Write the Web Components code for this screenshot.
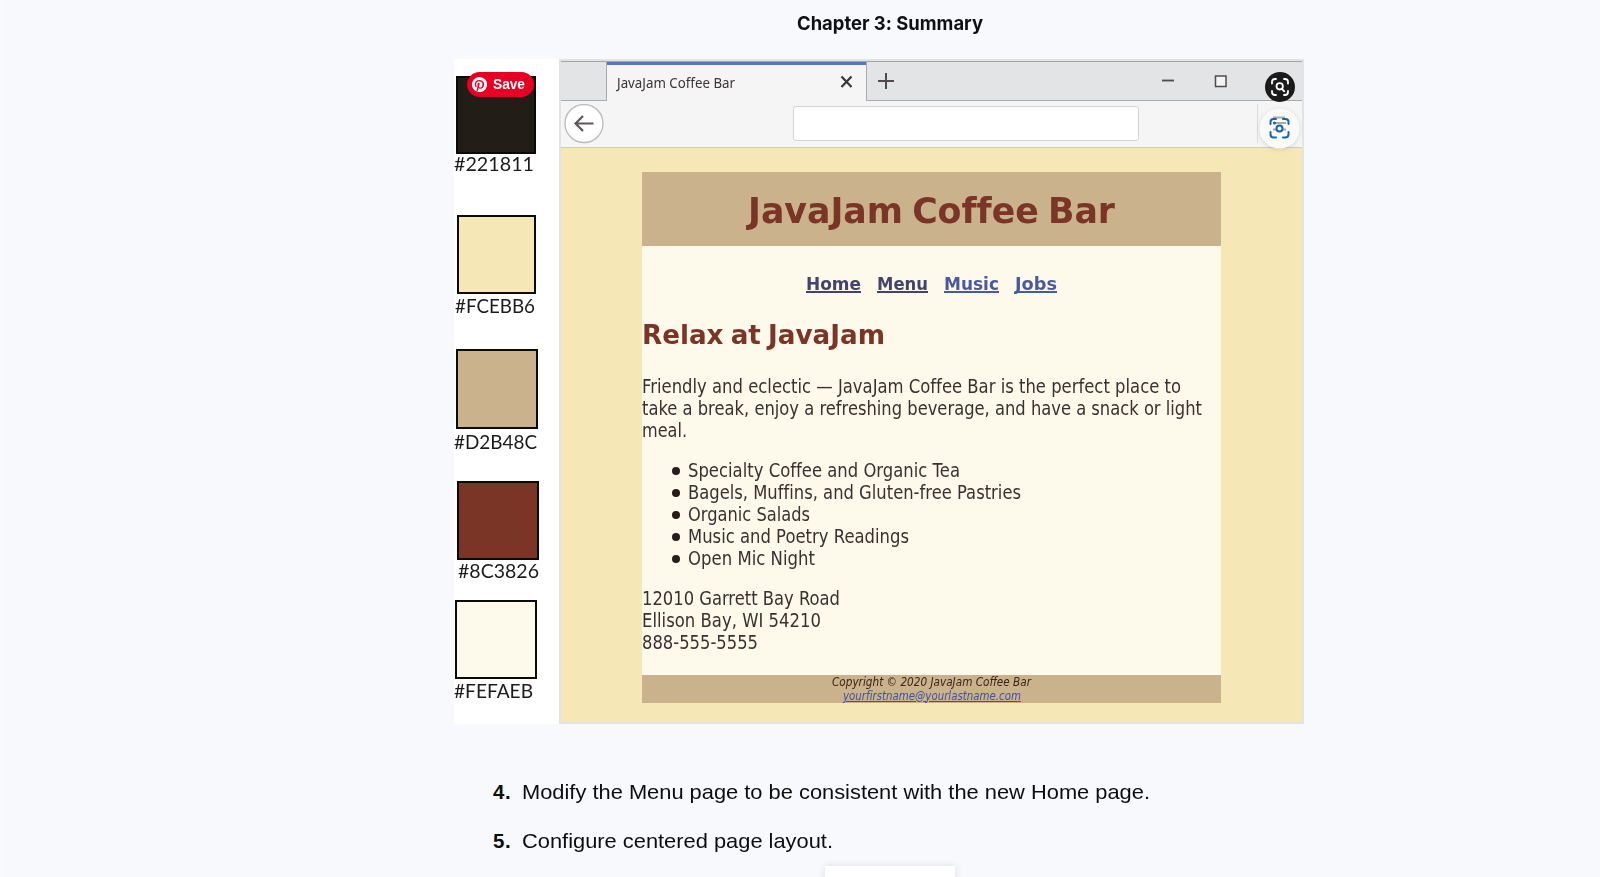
<!DOCTYPE html>
<html lang="en"><head><meta charset="utf-8"><title>Chapter 3: Summary</title>
<style>html,body{margin:0;height:877px;overflow:hidden;background:#f8f9fd}body{font-family:"Liberation Sans",sans-serif}</style></head>
<body><chapter-page></chapter-page>
<script>
const define=(name,html,after)=>customElements.define(name,class extends HTMLElement{
  connectedCallback(){
    if(this.shadowRoot)return;
    this.attachShadow({mode:'open'}).innerHTML=typeof html==='function'?html(this):html;
    if(after)after(this);
  }
});
/* One line of text condensed or widened to the width in its "w" attribute. */
define('fit-text',`<style>:host{display:block;white-space:nowrap;font-variant-ligatures:none}span{display:inline-block;transform-origin:0 50%;text-decoration:inherit}</style><span><slot></slot></span>`,el=>{
  const s=el.shadowRoot.querySelector('span'),w=+el.getAttribute('w');
  el.style.width=w+'px';
  s.style.transform=`scaleX(${w/s.getBoundingClientRect().width})`;
});
define('color-swatch',el=>`<style>:host{display:block}
.box{box-sizing:border-box;width:${el.getAttribute('bw')}px;height:${el.getAttribute('bh')}px;margin-left:${el.getAttribute('bx')}px;background:${el.getAttribute('fill')};border:2.5px solid #0c0a09}
fit-text{font:19px/24px Lato,sans-serif;color:#1c1a1b;height:24px;margin-left:${el.getAttribute('tx')}px;margin-top:${el.getAttribute('gap')||0}px}</style>
<div class="box"></div><fit-text w="${el.getAttribute('tw')}">${el.getAttribute('label')}</fit-text>`);
define('save-button',`<style>:host{display:flex;align-items:center;box-sizing:border-box;width:67px;height:25px;border-radius:13px;background:#e60023;padding-left:5px;gap:6px;color:#fff;font:bold 14px/25px "Liberation Sans",sans-serif}svg{display:block}fit-text{height:25px}</style>
<svg width="15" height="15" viewBox="0 0 24 24"><path fill="#fff" d="M12 0a12 12 0 0 0-4.4 23.2c-.1-1-.2-2.400 0-3.400l1.400-6s-.35-.7-.35-1.750c0-1.650.95-2.870 2.150-2.870 1 0 1.500.76 1.500 1.670 0 1.020-.65 2.540-.98 3.950-.28 1.180.59 2.140 1.750 2.140 2.100 0 3.720-2.220 3.720-5.420 0-2.830-2.040-4.810-4.940-4.810-3.370 0-5.350 2.520-5.350 5.140 0 1.020.39 2.110.88 2.700.1.120.11.220.08.340l-.33 1.340c-.05.220-.17.260-.4.160-1.480-.69-2.400-2.850-2.400-4.590 0-3.740 2.720-7.170 7.830-7.170 4.110 0 7.310 2.930 7.310 6.850 0 4.080-2.580 7.370-6.150 7.370-1.200 0-2.330-.62-2.720-1.360l-.74 2.820c-.27 1.030-1 2.320-1.480 3.110A12 12 0 1 0 12 0z"/></svg>
<fit-text w="32">Save</fit-text>`);
define('palette-strip',`<style>:host{display:block;position:relative;width:105px;height:665px;background:#fff}
color-swatch{height:0}.rows{display:flow-root}save-button{position:absolute;left:13px;top:13px}
.a{margin-top:17px}.b{margin-top:139px}.c{margin-top:134px}.d{margin-top:132px}.e{margin-top:119px}</style>
<div class="rows">
<color-swatch class="a" bx="2" bw="80" bh="78" fill="#221e17" tx="0" tw="80" label="#221811" gap="-2"></color-swatch>
<color-swatch class="b" bx="3" bw="79" bh="79" fill="#f6e8b6" tx="1" tw="80" label="#FCEBB6"></color-swatch>
<color-swatch class="c" bx="2" bw="82" bh="80" fill="#c9b28c" tx="0" tw="83" label="#D2B48C" gap="1"></color-swatch>
<color-swatch class="d" bx="3" bw="82" bh="79" fill="#7b3526" tx="4" tw="81" label="#8C3826" gap="-1"></color-swatch>
<color-swatch class="e" bx="1" bw="82" bh="79" fill="#fefaeb" tx="0" tw="79" label="#FEFAEB"></color-swatch>
</div><save-button></save-button>`);
define('browser-tabs',`<style>:host{display:flex;box-sizing:border-box;height:40px;border-top:1px solid #a5a5a6;background:#e2e4e5}
.lead{width:46px;border-bottom:1px solid #aaa;border-right:1px solid #aaa;box-sizing:border-box}
.tab{width:259px;box-sizing:border-box;border-top:3px solid #5578bb;background:#f5f5f5;display:flex;align-items:center;padding:0 12px 0 10px;justify-content:space-between}
fit-text{font:15px/20px "Noto Sans",sans-serif;color:#3b3436;position:relative;top:-1px}
.rest{flex:1;border-bottom:1px solid #aaa;border-left:1px solid #aaa;display:block}svg{display:block}</style>
<div class="lead"></div><div class="tab"><fit-text w="118">JavaJam Coffee Bar</fit-text>
<svg width="14" height="14" viewBox="0 0 14 14" style="margin-top:-2px"><path d="M1.500 1.500 11.500 12M11.500 1.500 1.500 12" stroke="#3b3638" stroke-width="2.200"/></svg></div>
<div class="rest"><svg width="435" height="37"><path d="M11 19h16M19 11v16" stroke="#514a4c" stroke-width="2"/><path d="M295 18.500h12" stroke="#514a4c" stroke-width="1.800"/><rect x="348.500" y="14" width="10.500" height="10.500" fill="#f4f4f4" stroke="#514a4c" stroke-width="1.500"/></svg></div>`);
define('browser-toolbar',`<style>:host{display:flex;box-sizing:border-box;height:47px;background:#f5f5f5;border-bottom:1px solid #c9cdd2;padding:3px 0 0 3px;align-items:flex-start}
svg{display:block}.url{box-sizing:border-box;width:346px;height:35px;margin:2px 0 0 189px;border:1.500px solid #d2d3d4;border-radius:3px;background:#fff}.line{width:1px;height:39px;background:#dcdcdc;margin:0 0 0 118px}</style>
<svg width="40" height="40" viewBox="0 0 40 40"><circle cx="20" cy="19.500" r="19" fill="#fff" stroke="#b9b9ba" stroke-width="1.300"/><path d="M29.500 19.500H12M19 12l-7.500 7.500L19 27" fill="none" stroke="#5e575a" stroke-width="2.200"/></svg>
<div class="url"></div><div class="line"></div>`);
define('nav-link',el=>`<style>:host{display:block;height:22px;color:#4a5a9f;font-weight:bold}fit-text{border-bottom:2px solid currentColor;height:17px;line-height:19px}</style><fit-text w="${el.getAttribute('w')}">${el.textContent}</fit-text>`);
define('coffee-site',`<style>:host{display:block;box-sizing:border-box;width:578.500px;height:530px;margin:24px 0 0 81px;background:#fefaeb;color:#3a3030;font:19.300px/22px "DejaVu Sans",sans-serif}
header{height:74px;box-sizing:border-box;padding:15px 0 0 106px;background:#c9b28c;color:#7b3526;font:bold 36px/48px "DejaVu Sans",sans-serif;word-spacing:-3px}
nav{display:flex;gap:16px;height:22px;padding:28px 0 0 164px;font-size:18.500px;line-height:22px}
nav nav-link:nth-child(-n+2){color:#42446f}
h2{margin:22px 0 0;height:34px;font:bold 27px/34px "DejaVu Sans",sans-serif;color:#7b3526;word-spacing:-2px}
.p{margin-top:23.500px}ul{list-style:none;margin:18px 0 0;padding:0 0 0 30px}li{display:flex;align-items:center;gap:8px}
i{width:8px;height:8px;border-radius:50%;background:#241d1a}address{font-style:normal;margin-top:18px}
footer{margin-top:21px;height:28px;background:#c9b28c;font:italic 12.200px/14px "DejaVu Sans",sans-serif;padding:0 0 0 190px;box-sizing:border-box;color:#392719}
.mail{margin-left:11px;color:#4451a3;text-decoration:underline}</style>
<header><fit-text w="367">JavaJam Coffee Bar</fit-text></header>
<nav><nav-link w="55">Home</nav-link><nav-link w="51">Menu</nav-link><nav-link w="55">Music</nav-link><nav-link w="42">Jobs</nav-link></nav>
<h2><fit-text w="243">Relax at JavaJam</fit-text></h2>
<div class="p"><fit-text w="539">Friendly and eclectic — JavaJam Coffee Bar is the perfect place to</fit-text><fit-text w="560">take a break, enjoy a refreshing beverage, and have a snack or light</fit-text><fit-text w="45">meal.</fit-text></div>
<ul><li><i></i><fit-text w="272">Specialty Coffee and Organic Tea</fit-text></li><li><i></i><fit-text w="333">Bagels, Muffins, and Gluten-free Pastries</fit-text></li><li><i></i><fit-text w="122">Organic Salads</fit-text></li><li><i></i><fit-text w="221">Music and Poetry Readings</fit-text></li><li><i></i><fit-text w="127">Open Mic Night</fit-text></li></ul>
<address><fit-text w="198">12010 Garrett Bay Road</fit-text><fit-text w="179">Ellison Bay, WI 54210</fit-text><fit-text w="116">888-555-5555</fit-text></address>
<footer><fit-text w="199">Copyright © 2020 JavaJam Coffee Bar</fit-text><fit-text class="mail" w="178">yourfirstname@yourlastname.com</fit-text></footer>`);
define('lens-badges',`<style>:host{display:block;width:40px}svg{display:block;overflow:visible}.v{filter:drop-shadow(0 1px 2px #0002)}</style>
<svg width="40" height="36" viewBox="0 0 40 36"><circle cx="21" cy="15" r="15" fill="#1b1b1c"/><g fill="none" stroke="#fff" stroke-width="1.800" stroke-linecap="round"><path d="M13 11.500V10q0-3 3-3h1M25 7h1q3 0 3 3v1.500M29 19v1q0 3-3 3h-1M17 23h-1q-3 0-3-3v-1"/><circle cx="20.700" cy="14.300" r="3.200"/><path d="m23 17 2.300 2.300"/></g></svg>
<svg class="v" width="40" height="41" viewBox="0 0 40 41"><circle cx="20.500" cy="20.500" r="20" fill="#fafafb"/><g stroke="#aaa" stroke-width="2.200"><path d="M14 9.500h12M14 15h13M14 21.500h13"/></g><g fill="none" stroke="#1264b5" stroke-width="2" stroke-linecap="round"><path d="M11.500 16V14q0-3 3-3H17M24 11h2.500q3 0 3 3v2M29.500 24v2q0 3.500-3.500 3.500H24M17 29.500h-2.500q-3 0-3-3.500v-2"/><circle cx="20.500" cy="20.500" r="3" fill="#fafafb"/></g><circle cx="15.500" cy="15" r="1.500" fill="#1264b5"/></svg>`);
define('browser-window',`<style>:host{display:block;box-sizing:border-box;position:relative;width:745px;height:665px;border:2px solid #e2e3e5;background:#f6e8b6;overflow:hidden}lens-badges{position:absolute;left:698px;top:11px}</style>
<browser-tabs></browser-tabs><browser-toolbar></browser-toolbar><coffee-site></coffee-site><lens-badges></lens-badges>`);
define('step-item',el=>`<style>:host{display:flex;font:21px/24px "Liberation Sans",sans-serif;color:#0d0d0f;height:24px}b{width:29px;font-size:20.500px;letter-spacing:.5px}</style><b>${el.getAttribute('n')}.</b><fit-text w="${el.getAttribute('w')}">${el.textContent}</fit-text>`);
define('chapter-page',`<style>:host{display:flex;flex-direction:column;height:877px;overflow:hidden;background:linear-gradient(90deg,#fbfbfd 0,#f8f9fd 8px)}
h1{margin:11px 0 0 797px;height:25px;font:bold 19px/25px Inter,sans-serif;color:#101012}
.figure{display:flex;margin:23px 0 0 454px}
.steps{display:flex;flex-direction:column;gap:25px;margin:56px 0 0 493px}
.peek{width:130px;height:30px;flex:none;margin:13px 0 0 825px;background:#fff;box-shadow:0 0 8px #0000001c}
.figure,h1,.steps{flex:none}</style>
<h1><fit-text w="186">Chapter 3: Summary</fit-text></h1>
<div class="figure"><palette-strip></palette-strip><browser-window></browser-window></div>
<div class="steps"><step-item n="4" w="628">Modify the Menu page to be consistent with the new Home page.</step-item><step-item n="5" w="311">Configure centered page layout.</step-item></div>
<div class="peek"></div>`);
</script></body></html>
